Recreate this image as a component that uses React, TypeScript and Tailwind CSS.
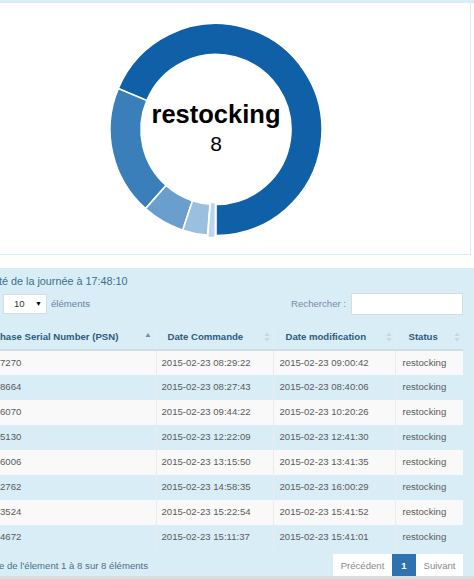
import React from "react";

const CX = 216;
const CY = 126.5;

function pt(a: number, r: number) {
  const rad = (a * Math.PI) / 180;
  return [CX + r * Math.sin(rad), CY - r * Math.cos(rad)];
}

function arc(a0: number, a1: number, R: number, r: number) {
  const [x0, y0] = pt(a0, R);
  const [x1, y1] = pt(a1, R);
  const [x2, y2] = pt(a1, r);
  const [x3, y3] = pt(a0, r);
  const large = a1 - a0 > 180 ? 1 : 0;
  return `M${x0} ${y0} A${R} ${R} 0 ${large} 1 ${x1} ${y1} L${x2} ${y2} A${r} ${r} 0 ${large} 0 ${x3} ${y3} Z`;
}

const segs = [
  { a0: 292.7, a1: 540, c: "#0f60a7", R: 106, r: 75 },
  { a0: 221.7, a1: 292.7, c: "#3a7fb9", R: 106, r: 75 },
  { a0: 198.3, a1: 221.7, c: "#6a9fcd", R: 106, r: 75 },
  { a0: 184.6, a1: 198.3, c: "#9abfdf", R: 106, r: 75 },
  { a0: 180.4, a1: 184.4, c: "#bcd5ea", R: 108, r: 73 },
];

const rows = [
  ["7270", "2015-02-23 08:29:22", "2015-02-23 09:00:42"],
  ["8664", "2015-02-23 08:27:43", "2015-02-23 08:40:06"],
  ["6070", "2015-02-23 09:44:22", "2015-02-23 10:20:26"],
  ["5130", "2015-02-23 12:22:09", "2015-02-23 12:41:30"],
  ["6006", "2015-02-23 13:15:50", "2015-02-23 13:41:35"],
  ["2762", "2015-02-23 14:58:35", "2015-02-23 16:00:29"],
  ["3524", "2015-02-23 15:22:54", "2015-02-23 15:41:52"],
  ["4672", "2015-02-23 15:11:37", "2015-02-23 15:41:01"],
];

function SortBoth() {
  return (
    <svg width="6" height="10" viewBox="0 0 6 10" className="shrink-0">
      <path d="M3 0.5 L5.5 4 L0.5 4 Z" fill="#c3d7e6" />
      <path d="M3 9.5 L5.5 6 L0.5 6 Z" fill="#c3d7e6" />
    </svg>
  );
}

function SortUp() {
  return (
    <svg width="6" height="10" viewBox="0 0 6 10" className="shrink-0">
      <path d="M3 1 L5.5 5 L0.5 5 Z" fill="#6d8fb3" />
    </svg>
  );
}

export default function App() {
  return (
    <div
      className="w-[474px] h-[579px] overflow-hidden bg-white flex flex-col"
      style={{ fontFamily: '"Liberation Sans", Arial, sans-serif' }}
    >
      <div className="h-[3px] bg-[#d9edf7] shrink-0" />
      <div className="h-[252px] shrink-0 bg-white border-b border-[#d8e9f2] border-r w-[471px] relative">
        <svg width="471" height="251" viewBox="0 0 471 251">
          {segs.map((s, i) => (
            <path key={i} d={arc(s.a0, s.a1, s.R, s.r)} fill={s.c} stroke="#ffffff" strokeWidth={1.6} />
          ))}
          <text
            x={CX}
            y={119.5}
            textAnchor="middle"
            fontFamily='"Liberation Sans", Arial, sans-serif'
            fontWeight="bold"
            fontSize="25.5"
            fill="#000"
          >
            restocking
          </text>
          <text
            x={CX}
            y={147.5}
            textAnchor="middle"
            fontFamily='"Liberation Sans", Arial, sans-serif'
            fontSize="21"
            fill="#000"
          >
            8
          </text>
        </svg>
      </div>
      <div className="h-[13px] shrink-0 bg-white" />
      <div className="h-[308px] shrink-0 bg-[#d9edf7] overflow-hidden flex flex-col">
        <div className="mt-[5px] h-[18px] flex items-center text-[10.8px] text-[#3b6e8c] -ml-[1px] whitespace-nowrap">
          té de la journée à 17:48:10
        </div>
        <div className="mt-[4px] h-[24px] flex items-center w-[463px]">
          <div className="ml-[3px] w-[44px] h-[20px] bg-white border border-[#d6dde2] flex items-center pl-[10px] pr-[4px] text-[9.6px] text-[#333]">
            <span className="flex-1">10</span>
            <span className="text-[7px] text-black">▼</span>
          </div>
          <span className="ml-[4px] text-[9.6px] text-[#5f86a3]">éléments</span>
          <span className="ml-auto text-[9.6px] text-[#6f8ea6]">Rechercher :</span>
          <div className="ml-[5px] w-[112px] h-[22px] bg-white border border-[#d6dde2]" />
        </div>
        <table className="mt-[10px] w-[463px] table-fixed border-collapse text-[9.6px]">
          <colgroup>
            <col className="w-[156px]" />
            <col className="w-[117px]" />
            <col className="w-[122px]" />
            <col className="w-[68px]" />
          </colgroup>
          <thead>
            <tr className="h-[25px] border-b-2 border-[#cfdde6]">
              <th className="border-r border-[#e3eff6] font-bold text-left text-[#2e5b7a] pr-[5px]">
                <div className="flex items-center">
                  <span className="flex-1 whitespace-nowrap">hase Serial Number (PSN)</span>
                  <SortUp />
                </div>
              </th>
              <th className="border-r border-[#e3eff6] font-bold text-left text-[#2e5b7a] pl-[11px] pr-[3px]">
                <div className="flex items-center">
                  <span className="flex-1 whitespace-nowrap">Date Commande</span>
                  <SortBoth />
                </div>
              </th>
              <th className="border-r border-[#e3eff6] font-bold text-left text-[#2e5b7a] pl-[12px] pr-[3px]">
                <div className="flex items-center">
                  <span className="flex-1 whitespace-nowrap">Date modification</span>
                  <SortBoth />
                </div>
              </th>
              <th className="font-bold text-left text-[#2e5b7a] pl-[13px] pr-[3px]">
                <div className="flex items-center">
                  <span className="flex-1 whitespace-nowrap">Status</span>
                  <SortBoth />
                </div>
              </th>
            </tr>
          </thead>
          <tbody>
            {rows.map((r, i) => (
              <tr
                key={i}
                className={`h-[25px] text-[#5a5a5a] ${i % 2 === 0 ? "bg-[#f9f9f9]" : "bg-[#d9edf7]"}`}
              >
                <td className="border-r border-[#ececec] whitespace-nowrap">{r[0]}</td>
                <td className="border-r border-[#ececec] pl-[5px] whitespace-nowrap">{r[1]}</td>
                <td className="border-r border-[#ececec] pl-[6px] whitespace-nowrap">{r[2]}</td>
                <td className="pl-[7px] whitespace-nowrap">restocking</td>
              </tr>
            ))}
          </tbody>
        </table>
        <div className="mt-[4px] h-[24px] flex items-start w-[463px]">
          <span className="mt-[5px] text-[9.6px] text-[#4d6d85] whitespace-nowrap -ml-[1px]">
            e de l'élement 1 à 8 sur 8 éléments
          </span>
          <div className="ml-auto flex h-[24px] text-[9.6px]">
            <div className="w-[59px] bg-white flex items-center justify-center text-[#8a8a8a]">Précédent</div>
            <div className="w-[24px] bg-[#2f72b0] flex items-center justify-center text-white font-bold">1</div>
            <div className="w-[47px] bg-white flex items-center justify-center text-[#8a8a8a]">Suivant</div>
          </div>
        </div>
      </div>
      <div className="flex-1 bg-[#dcdcdc]" />
    </div>
  );
}
